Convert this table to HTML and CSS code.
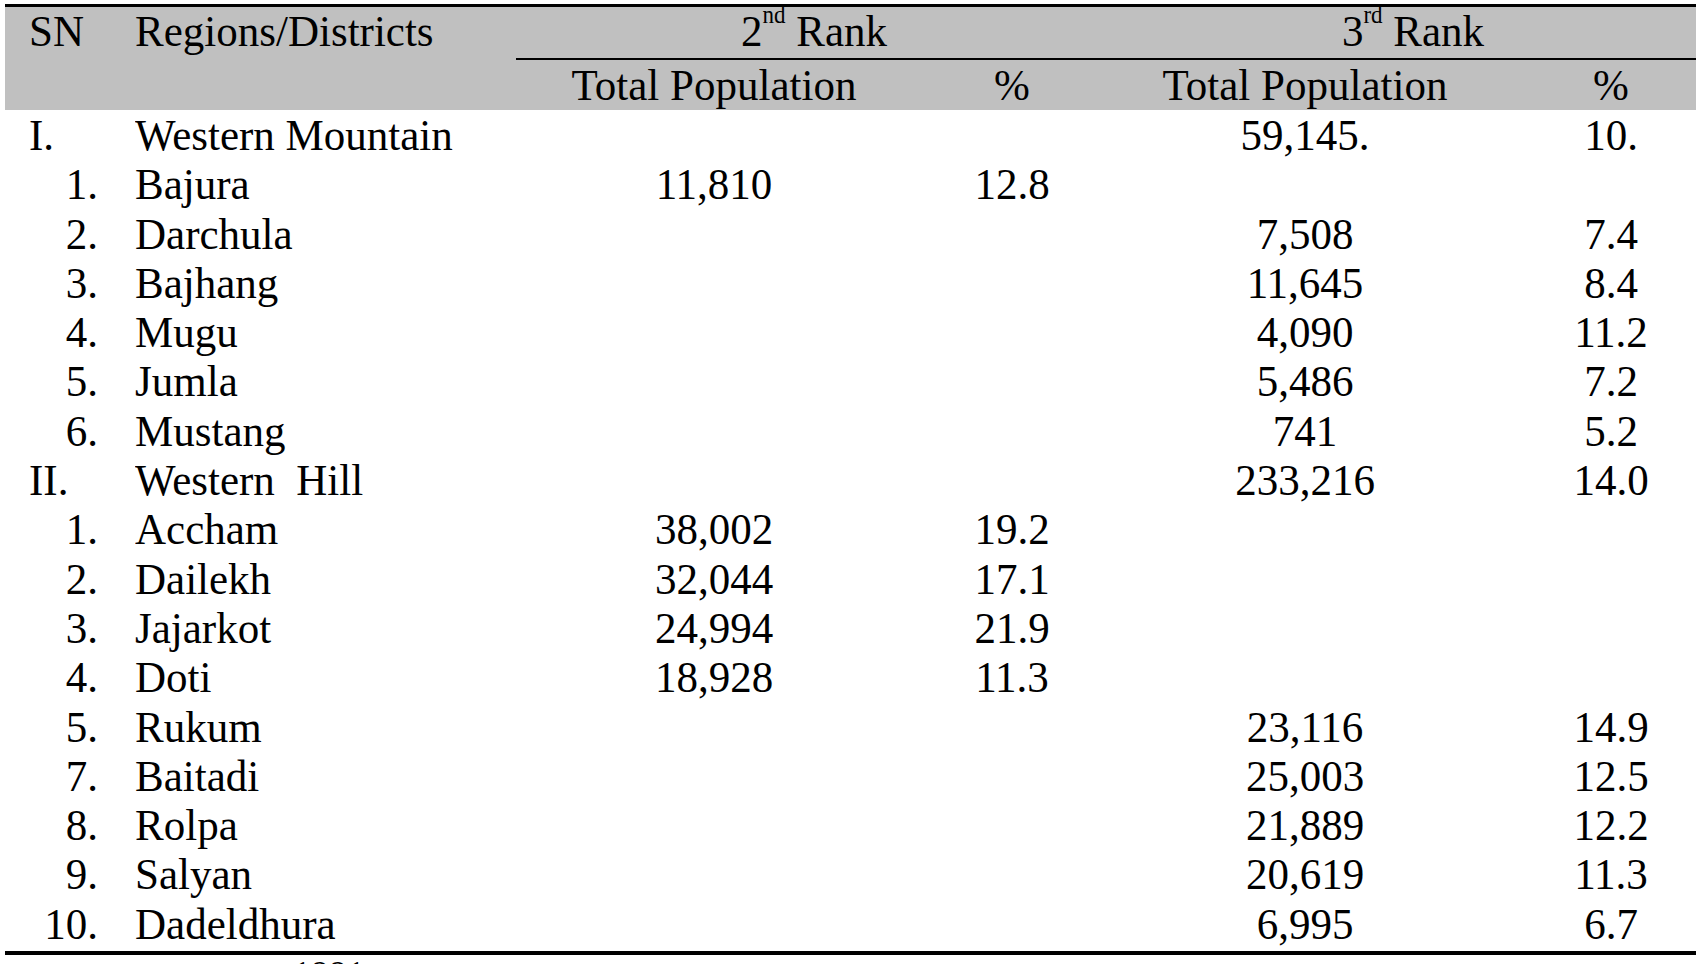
FILE: index.html
```html
<!DOCTYPE html>
<html lang="en">
<head>
<meta charset="utf-8">
<title>Regions/Districts ranking</title>
<link rel="stylesheet" href="styles.css">
</head>
<body>
<div class="sheet">
  <div class="head">
    <div class="row hrow1">
      <div class="sn-r">SN</div>
      <div class="name">Regions/Districts</div>
      <div class="grp"><span class="gt">2<span class="sup">nd</span> Rank</span></div>
      <div class="grp third"><span class="gt">3<span class="sup">rd</span> Rank</span></div>
    </div>
    <div class="row hrow2">
      <div></div>
      <div></div>
      <div class="num">Total Population</div>
      <div class="num">%</div>
      <div class="num">Total Population</div>
      <div class="num">%</div>
    </div>
  </div>
  <div class="body">
    <div class="row drow"><div class="sn-r">I.</div><div class="name">Western Mountain</div><div class="num"></div><div class="num"></div><div class="num">59,145.</div><div class="num">10.</div></div>
    <div class="row drow"><div class="sn-n">1.</div><div class="name">Bajura</div><div class="num">11,810</div><div class="num">12.8</div><div class="num"></div><div class="num"></div></div>
    <div class="row drow"><div class="sn-n">2.</div><div class="name">Darchula</div><div class="num"></div><div class="num"></div><div class="num">7,508</div><div class="num">7.4</div></div>
    <div class="row drow"><div class="sn-n">3.</div><div class="name">Bajhang</div><div class="num"></div><div class="num"></div><div class="num">11,645</div><div class="num">8.4</div></div>
    <div class="row drow"><div class="sn-n">4.</div><div class="name">Mugu</div><div class="num"></div><div class="num"></div><div class="num">4,090</div><div class="num">11.2</div></div>
    <div class="row drow"><div class="sn-n">5.</div><div class="name">Jumla</div><div class="num"></div><div class="num"></div><div class="num">5,486</div><div class="num">7.2</div></div>
    <div class="row drow"><div class="sn-n">6.</div><div class="name">Mustang</div><div class="num"></div><div class="num"></div><div class="num">741</div><div class="num">5.2</div></div>
    <div class="row drow"><div class="sn-r">II.</div><div class="name">Western&nbsp; Hill</div><div class="num"></div><div class="num"></div><div class="num">233,216</div><div class="num">14.0</div></div>
    <div class="row drow"><div class="sn-n">1.</div><div class="name">Accham</div><div class="num">38,002</div><div class="num">19.2</div><div class="num"></div><div class="num"></div></div>
    <div class="row drow"><div class="sn-n">2.</div><div class="name">Dailekh</div><div class="num">32,044</div><div class="num">17.1</div><div class="num"></div><div class="num"></div></div>
    <div class="row drow"><div class="sn-n">3.</div><div class="name">Jajarkot</div><div class="num">24,994</div><div class="num">21.9</div><div class="num"></div><div class="num"></div></div>
    <div class="row drow"><div class="sn-n">4.</div><div class="name">Doti</div><div class="num">18,928</div><div class="num">11.3</div><div class="num"></div><div class="num"></div></div>
    <div class="row drow"><div class="sn-n">5.</div><div class="name">Rukum</div><div class="num"></div><div class="num"></div><div class="num">23,116</div><div class="num">14.9</div></div>
    <div class="row drow"><div class="sn-n">7.</div><div class="name">Baitadi</div><div class="num"></div><div class="num"></div><div class="num">25,003</div><div class="num">12.5</div></div>
    <div class="row drow"><div class="sn-n">8.</div><div class="name">Rolpa</div><div class="num"></div><div class="num"></div><div class="num">21,889</div><div class="num">12.2</div></div>
    <div class="row drow"><div class="sn-n">9.</div><div class="name">Salyan</div><div class="num"></div><div class="num"></div><div class="num">20,619</div><div class="num">11.3</div></div>
    <div class="row drow"><div class="sn-n">10.</div><div class="name">Dadeldhura</div><div class="num"></div><div class="num"></div><div class="num">6,995</div><div class="num">6.7</div></div>
  </div>
  <div class="note">1991</div>
</div>
</body>
</html>
```

FILE: styles.css
```css
html, body {
  margin: 0;
  padding: 0;
  overflow: hidden;
  background: #ffffff;
}

body {
  font-family: "Liberation Serif", "Times New Roman", serif;
  font-size: 43px;
  color: #000000;
}

.sheet {
  width: 1719px;
  margin: 4px 0 0 5px;
}

.head {
  background: #c0c0c0;
  border-top: 3px solid #000000;
}

.row {
  display: grid;
  grid-template-columns: 125px 386px 396px 200px 386px 226px;
  white-space: nowrap;
}

/* the printed face is a little taller than it is wide */
.row > div:not(.grp),
.gt {
  transform: scaleY(1.055);
}

.gt {
  display: inline-block;
}

.hrow1 {
  height: 53px;
  line-height: 48px;
}

.grp {
  grid-column: span 2;
  text-align: center;
  border-bottom: 2px solid #000000;
  box-sizing: border-box;
}

.grp.third {
  padding-right: 10px;
}

.sup {
  font-size: 23px;
  vertical-align: 22px;
  line-height: 0;
}

.hrow2 {
  height: 50px;
  line-height: 50px;
}

.body {
  border-bottom: 4px solid #000000;
  padding-bottom: 3px;
}

.drow {
  height: 49.3px;
  line-height: 49.3px;
}

.sn-r {
  padding-left: 24px;
}

.sn-n {
  text-align: right;
  padding-right: 32px;
}

.name {
  padding-left: 5px;
}

.num {
  text-align: center;
}

.note {
  font-size: 36px;
  line-height: 38px;
  padding-left: 288px;
}
```
